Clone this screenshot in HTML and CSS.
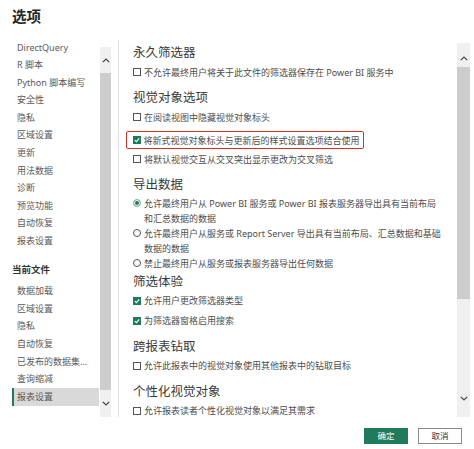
FILE: index.html
```html
<!DOCTYPE html>
<html lang="zh-CN">
<head>
<meta charset="utf-8">
<title>选项</title>
<link rel="stylesheet" href="styles.css">
</head>
<body>
<div class="dialog">
  <header class="title">选项</header>
  <div class="body">
    <nav class="nav">
      <ul class="nav-list">
        <li class="nav-item">DirectQuery</li>
        <li class="nav-item">R 脚本</li>
        <li class="nav-item">Python 脚本编写</li>
        <li class="nav-item">安全性</li>
        <li class="nav-item">隐私</li>
        <li class="nav-item">区域设置</li>
        <li class="nav-item">更新</li>
        <li class="nav-item">用法数据</li>
        <li class="nav-item">诊断</li>
        <li class="nav-item">预览功能</li>
        <li class="nav-item">自动恢复</li>
        <li class="nav-item">报表设置</li>
        <li class="nav-header">当前文件</li>
        <li class="nav-item">数据加载</li>
        <li class="nav-item">区域设置</li>
        <li class="nav-item">隐私</li>
        <li class="nav-item">自动恢复</li>
        <li class="nav-item">已发布的数据集...</li>
        <li class="nav-item">查询缩减</li>
        <li class="nav-item selected">报表设置</li>
      </ul>
    </nav>
    <div class="scrollbar sb-left">
      <div class="sb-arrow sb-top"><svg width="8" height="5" viewBox="0 0 8 5"><polyline points="0.8,4.2 4,1 7.2,4.2" fill="none" stroke="#444" stroke-width="1.2"/></svg></div>
      <div class="sb-thumb"></div>
      <div class="sb-rest"><div class="sb-arrow sb-bottom"><svg width="8" height="5" viewBox="0 0 8 5"><polyline points="0.8,0.8 4,4 7.2,0.8" fill="none" stroke="#444" stroke-width="1.2"/></svg></div></div>
    </div>
    <div class="divider"></div>
    <main class="content">
      <section class="section">
        <h2 class="section-title">永久筛选器</h2>
        <div class="option"><span class="check"></span><span>不允许最终用户将关于此文件的筛选器保存在 Power BI 服务中</span></div>
      </section>
      <section class="section">
        <h2 class="section-title">视觉对象选项</h2>
        <div class="option"><span class="check"></span><span>在阅读视图中隐藏视觉对象标头</span></div>
        <div class="option highlight"><span class="check checked"><svg width="6" height="6" viewBox="0 0 6 6"><polyline points="0.8,3.1 2.4,4.6 5.3,1.3" fill="none" stroke="#fff" stroke-width="1.1"/></svg></span><span>将新式视觉对象标头与更新后的样式设置选项结合使用</span></div>
        <div class="option"><span class="check"></span><span>将默认视觉交互从交叉突出显示更改为交叉筛选</span></div>
      </section>
      <section class="section">
        <h2 class="section-title">导出数据</h2>
        <div class="radio-group">
          <div class="radio-option"><span class="radio on"></span><span>允许最终用户从 Power BI 服务或 Power BI 报表服务器导出具有当前布局<br>和汇总数据的数据</span></div>
          <div class="radio-option"><span class="radio"></span><span>允许最终用户从服务或 Report Server 导出具有当前布局、汇总数据和基础<br>数据的数据</span></div>
          <div class="radio-option"><span class="radio"></span><span>禁止最终用户从服务或报表服务器导出任何数据</span></div>
        </div>
      </section>
      <section class="section tight">
        <h2 class="section-title">筛选体验</h2>
        <div class="option"><span class="check checked"><svg width="6" height="6" viewBox="0 0 6 6"><polyline points="0.8,3.1 2.4,4.6 5.3,1.3" fill="none" stroke="#fff" stroke-width="1.1"/></svg></span><span>允许用户更改筛选器类型</span></div>
        <div class="option"><span class="check checked"><svg width="6" height="6" viewBox="0 0 6 6"><polyline points="0.8,3.1 2.4,4.6 5.3,1.3" fill="none" stroke="#fff" stroke-width="1.1"/></svg></span><span>为筛选器窗格启用搜索</span></div>
      </section>
      <section class="section">
        <h2 class="section-title">跨报表钻取</h2>
        <div class="option"><span class="check"></span><span>允许此报表中的视觉对象使用其他报表中的钻取目标</span></div>
      </section>
      <section class="section">
        <h2 class="section-title">个性化视觉对象</h2>
        <div class="option"><span class="check"></span><span>允许报表读者个性化视觉对象以满足其需求</span></div>
      </section>
    </main>
    <div class="scrollbar sb-right">
      <div class="sb-arrow sb-top"><svg width="8" height="5" viewBox="0 0 8 5"><polyline points="0.8,4.2 4,1 7.2,4.2" fill="none" stroke="#444" stroke-width="1.2"/></svg></div>
      <div class="sb-thumb"></div>
      <div class="sb-rest"><div class="sb-arrow sb-bottom"><svg width="8" height="5" viewBox="0 0 8 5"><polyline points="0.8,0.8 4,4 7.2,0.8" fill="none" stroke="#444" stroke-width="1.2"/></svg></div></div>
    </div>
  </div>
  <footer class="footer">
    <button class="btn primary">确定</button>
    <button class="btn">取消</button>
  </footer>
</div>
</body>
</html>
```
FILE: styles.css
```css
* { box-sizing: border-box; }
html, body { margin: 0; padding: 0; background: #fff; }
body {
  font-family: "Noto Sans", "Noto Sans CJK SC", sans-serif;
  color: #4d4d4d;
}
.dialog { width: 474px; height: 449px; overflow: hidden; background: #fff; }
.title {
  height: 40px;
  padding: 6px 0 0 12px;
  font-size: 14.5px;
  line-height: 20px;
  font-weight: 600;
  color: #252525;
}
.body { display: flex; height: 377px; }

.nav { width: 100px; height: 377px; padding-top: 4px; overflow: hidden; }
.nav-list { list-style: none; margin: -5.5px 0 0 0; padding: 0; }
.nav-item {
  height: 17.6px;
  line-height: 17.6px;
  margin-left: 12px;
  width: 87px;
  padding-left: 5px;
  font-size: 9px;
  color: #5a5a5a;
  white-space: nowrap;
  overflow: hidden;
}
.nav-item.selected {
  background: #d9d9d9;
  border-left: 2px solid #217a5c;
  padding-left: 3px;
  height: 18px;
  line-height: 18px;
}
.nav-header {
  margin: 10.5px 0 2px 12px;
  height: 20px;
  line-height: 20px;
  font-size: 9.5px;
  font-weight: 700;
  color: #333;
}

.scrollbar { display: flex; flex-direction: column; background: #f0f0f0; }
.sb-left { width: 11px; margin-top: 7px; height: 370px; }
.sb-left .sb-top { height: 26px; }
.sb-left .sb-thumb { height: 317px; }
.sb-left .sb-rest { height: 27px; }
.sb-arrow { display: flex; align-items: center; justify-content: center; }
.sb-thumb { background: #cdcdcd; }
.sb-rest { display: flex; flex-direction: column; justify-content: flex-end; }
.sb-left .sb-bottom { height: 27px; }

.divider { width: 1px; margin-left: 7px; background: #e3e3e3; height: 377px; }

.content { flex: 1; padding: 4px 0 0 14px; overflow: hidden; height: 377px; }
.section { margin: 0; }
.section + .section { margin-top: 7px; }
.section.tight { margin-top: 2px; }
.section-title {
  margin: 0;
  font-size: 12.5px;
  line-height: 18px;
  height: 18px;
  font-weight: 400;
  color: #3a3a3a;
}
.option {
  display: flex;
  align-items: center;
  height: 20px;
  font-size: 9px;
  color: #4d4d4d;
  white-space: nowrap;
}
.option.highlight {
  width: max-content;
  height: 18px;
  margin: 4px 0 0 -7px;
  padding: 0 3px 0 5.5px;
  border: 1.5px solid #d4302b;
  border-radius: 2px;
}
.check {
  width: 8px;
  height: 8px;
  border: 1px solid #555;
  background: #fff;
  margin-right: 3px;
  flex: none;
  display: flex;
  align-items: center;
  justify-content: center;
}
.check.checked { background: #1e7a5e; border-color: #1e7a5e; }
.radio-group { padding-top: 1.5px; }
.radio-option {
  display: flex;
  align-items: flex-start;
  font-size: 9px;
  line-height: 15px;
  color: #4d4d4d;
  white-space: nowrap;
}
.radio {
  width: 8px;
  height: 8px;
  margin: 3.5px 3px 0 0;
  border: 1px solid #555;
  border-radius: 50%;
  flex: none;
  background: #fff;
}
.radio.on { border-color: #9ab5ab; background: #1e7a5e; box-shadow: inset 0 0 0 1px #fff; }

.sb-right { width: 13px; margin: 3px 4px 0 0; height: 374px; }
.sb-right .sb-top { height: 24px; padding-top: 6px; }
.sb-right .sb-thumb { height: 232px; }
.sb-right .sb-rest { height: 118px; }
.sb-right .sb-bottom { height: 38px; }

.footer {
  height: 32px;
  display: flex;
  justify-content: flex-end;
  align-items: flex-start;
  gap: 10px;
  padding: 11px 12px 0 0;
}
.btn {
  width: 44px;
  height: 16px;
  padding: 0;
  font-family: "Noto Sans", "Noto Sans CJK SC", sans-serif;
  font-size: 8.5px;
  line-height: 14px;
  border: 1px solid #8a8a8a;
  background: #fff;
  color: #333;
  border-radius: 0;
}
.btn.primary { background: #217a5c; border-color: #217a5c; color: #fff; }
```
